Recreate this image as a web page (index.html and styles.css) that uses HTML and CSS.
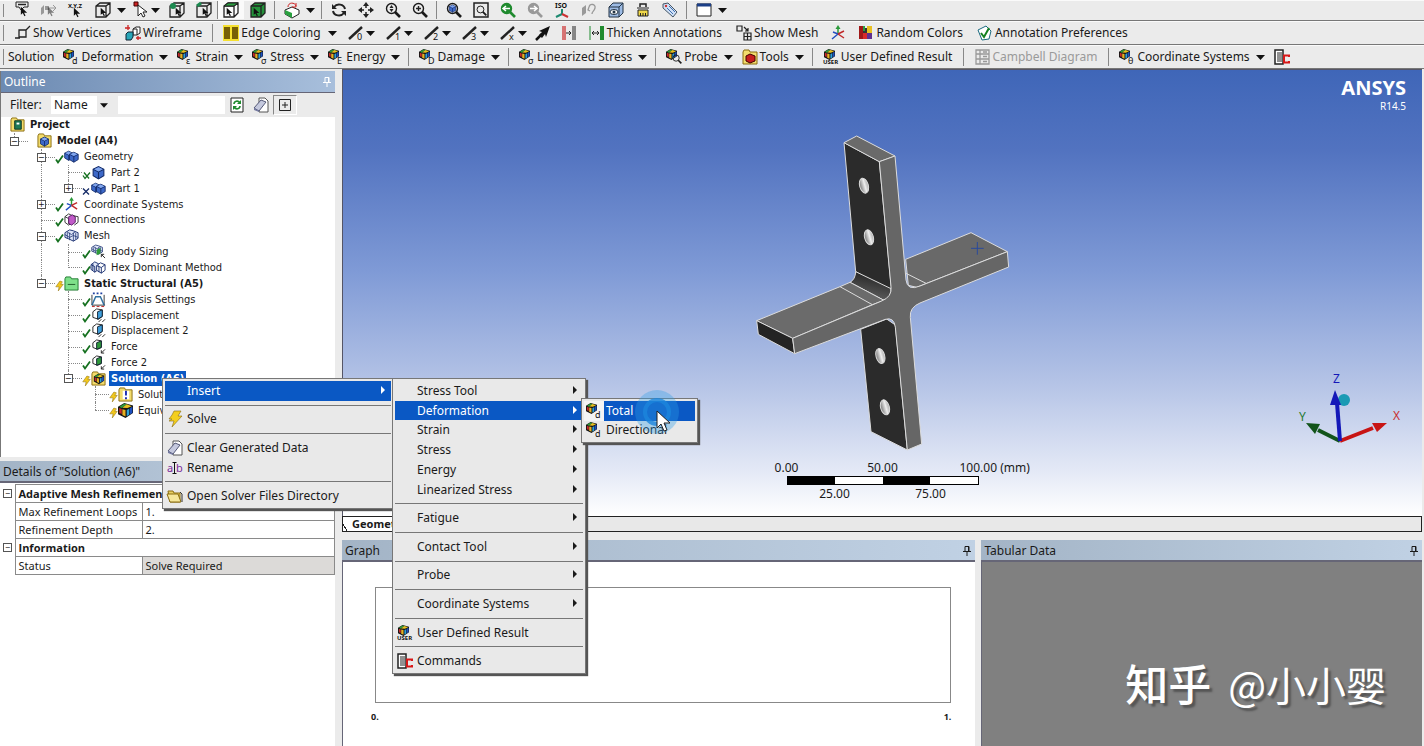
FILE: index.html
```html
<!DOCTYPE html>
<html lang="en">
<head>
  <meta charset="UTF-8">
  <meta name="viewport" content="width=device-width, initial-scale=1.0">
  <title>Static Structural - Mechanical</title>
  <link rel="stylesheet" href="styles.css">
</head>
<body>
  <!-- icon sprite -->
  <svg class="sprite" aria-hidden="true">
    <symbol id="caret" viewBox="0 0 9 5"><path d="M0 0h9L4.500 5z" fill="#111"/></symbol>
    <symbol id="pointer" viewBox="0 0 10 14"><path d="M1 1v10l2.500-2 2 4 1.500-1-2-3.500H9z" fill="#111"/></symbol>
    <symbol id="pin" viewBox="0 0 8 10"><path d="M2 .5h4v5H2zM0 5.500h8M4 6v4M5.500 1v4" fill="none" stroke="currentColor"/></symbol>
    <symbol id="box" viewBox="0 0 16 16"><path d="M1 4l4-3h10v10l-4 4H1zM1 4h10v11M11 4l4-3" fill="none" stroke="#222" stroke-width="1.300"/></symbol>
    <symbol id="rainbow" viewBox="0 0 12 12">
      <path d="M0 3l5-3 7 2v6l-6 4-6-3z" fill="#151515"/>
      <path d="M1 3l4-2.500L7 1 3 4z" fill="#2f9a3a"/><path d="M7 1l4 1.500L7.500 4 3.500 3.700z" fill="#e8c020"/>
      <path d="M1 4l2 .8v4L1 8z" fill="#c82a2a"/><path d="M3.500 5L6 5.500v5.200L3.500 9.500z" fill="#e8b020"/>
      <path d="M7 5.500l2-1v4.800l-2 1.200z" fill="#2aa0d8"/><path d="M9.500 4.200L11.500 3v5l-2 1z" fill="#1c4fc0"/>
    </symbol>
    <symbol id="result" viewBox="0 0 16 16"><use href="#rainbow" x="0" y="0" width="11" height="11"/></symbol>
    <symbol id="bluecube" viewBox="0 0 14 14"><path d="M2 4l5-2.500L12 4v6l-5 3-5-3z" fill="#3d68c8" stroke="#122a66"/><path d="M2 4l5 2.500L12 4M7 6.500V13" fill="none" stroke="#122a66"/><path d="M3 4l4-2 4 2-4 2z" fill="#83a7ee"/></symbol>
    <symbol id="twocubes" viewBox="0 0 16 14"><use href="#bluecube" x="-1" y="0" width="12" height="12"/><use href="#bluecube" x="4" y="1" width="13" height="13"/></symbol>
    <symbol id="folder" viewBox="0 0 16 16"><path d="M1 3l1-2h5l1 2h7v12H1z" fill="#f3dc6c" stroke="#8a6d10"/></symbol>
    <symbol id="f-project" viewBox="0 0 16 16"><use href="#folder"/><path d="M5 4h7v9H5z" fill="#1d7a58" stroke="#0b3325"/><path d="M7 6h3v2H7z" fill="#fff"/></symbol>
    <symbol id="f-model" viewBox="0 0 16 16"><use href="#folder"/><use href="#bluecube" x="2" y="3" width="12" height="12"/></symbol>
    <symbol id="f-static" viewBox="0 0 16 16"><path d="M1 3l1-2h5l1 2h7v12H1z" fill="#7ee08a" stroke="#1f7a30"/><path d="M4 9h8" stroke="#1f5a2a"/></symbol>
    <symbol id="f-result" viewBox="0 0 16 16"><use href="#folder"/><use href="#rainbow" x="3" y="3" width="11" height="11"/></symbol>
    <symbol id="f-info" viewBox="0 0 16 16"><use href="#folder"/><path d="M5 4h7v9H5z" fill="#fff"/><path d="M8.500 4v5M8.500 11v2" stroke="#1a2ab0" stroke-width="2"/></symbol>
    <symbol id="f-tools" viewBox="0 0 16 16"><use href="#folder"/><path d="M4 7l4-2 5 2v5l-5 2-4-2z" fill="#c81e1e" stroke="#400"/></symbol>
    <symbol id="axes" viewBox="0 0 16 16"><path d="M8 9V2" stroke="#2a9a3a" stroke-width="1.500"/><path d="M5.500 4L8 0l2.500 4z" fill="#2a9a3a"/><path d="M8 9l-6 5M3 7l5 2" stroke="#2450c0" stroke-width="1.500"/><path d="M8 9l6 4M8 9l6-3" stroke="#c02a2a" stroke-width="1.500"/></symbol>
    <symbol id="connect" viewBox="0 0 16 14"><path d="M1 4l4-3 4 2v7l-4 3-4-3zM1 4l4 2v6" fill="#fff" stroke="#333"/><path d="M5 4l4-2 3 2v6l-4 3-3-2z" fill="#c05ac8" stroke="#5a1a66"/><path d="M10 3l5 1v6l-4 3" fill="none" stroke="#333"/></symbol>
    <symbol id="mesh" viewBox="0 0 16 14"><path d="M1 4l5-3 4 1 5 2v6l-5 3-4-2-5-2z" fill="#dfe6f8" stroke="#1a2f70"/><path d="M1 6l5 3 4-2 5 2M3 3l5 3 4-3M6 4v8M3.500 4v6M10 4v9M12.500 4v7" fill="none" stroke="#1a2f70" stroke-width=".8"/></symbol>
    <symbol id="hexmesh" viewBox="0 0 16 14"><path d="M0 4l4-3 4 2v6l-4 3-4-3zM0 4l4 2v6M2 3v7" fill="#dfe6f8" stroke="#1a2f70"/><path d="M6 5l4-3 5 2v6l-4 3-5-3zM6 5l5 2 4-3M11 7v6M8.500 6v6" fill="#fff" stroke="#1a2f70"/></symbol>
    <symbol id="sizing" viewBox="0 0 16 16"><use href="#mesh" x="0" y="0" width="13" height="12"/><path d="M6 6l4-2v6l-4 2z" fill="#2f9a3a"/><path d="M11 11l4 4M11 14v-3h3" stroke="#222" fill="none"/></symbol>
    <symbol id="analysis" viewBox="0 0 16 16"><path d="M1 14V3M1 14h14M14 14V3" stroke="#333"/><path d="M1 14L5 5h5l4 9" fill="none" stroke="#3070a0" stroke-width="1.500"/><path d="M2 1.500h2M6 1.500h2M10 1.500h2" stroke="#2040a0" stroke-width="2"/><path d="M1 15.500h3M6 15.500h3M11 15.500h3" stroke="#c02020"/></symbol>
    <symbol id="disp" viewBox="0 0 16 16"><path d="M2 4l4-3 6 1v7l-4 3-6-2z" fill="#fff" stroke="#222"/><path d="M7 4l5-2v7l-5 3z" fill="#3f9fdc" stroke="#123"/><path d="M8 15l3-3M12 15l3-3" stroke="#222"/></symbol>
    <symbol id="force" viewBox="0 0 16 16"><path d="M2 4l4-3 5 1v7l-4 2-5-2z" fill="#fff" stroke="#222"/><path d="M6 4l5-2v7l-5 2z" fill="#2f9a3a" stroke="#123"/><path d="M15 11l-4 4M11 12v3h3" stroke="#222" fill="none"/></symbol>
    <symbol id="ok" viewBox="0 0 9 9"><path d="M1 5l2 3L8 1" fill="none" stroke="#15701f" stroke-width="1.800"/></symbol>
    <symbol id="okx" viewBox="0 0 9 9"><path d="M1 5l2 3 5-6M2 2l5 6" fill="none" stroke="#15701f" stroke-width="1.300"/></symbol>
    <symbol id="hidden" viewBox="0 0 9 9"><path d="M1 2l6 6M7 2L1 8" stroke="#142a66" stroke-width="1.300"/></symbol>
    <symbol id="bolt" viewBox="0 0 9 12"><path d="M5 0l3 1-2 3h3L3 12l1-5H0z" fill="#f2c81c" stroke="#8a6d10" stroke-width=".6"/></symbol>
    <symbol id="mag" viewBox="0 0 16 16"><circle cx="6.500" cy="6.500" r="5" fill="none" stroke="currentColor" stroke-width="1.400"/><path d="M10 10l5 5" stroke="currentColor" stroke-width="2.600"/></symbol>
    <symbol id="eraser" viewBox="0 0 16 16"><path d="M6 1h6l3 3v11H6z" fill="#fff" stroke="#555"/><path d="M1 11l7-8 5 2-7 9z" fill="#c5c9de" stroke="#555a78"/><path d="M1 11l5 3v1l-5-2z" fill="#7378a0"/></symbol>
    <symbol id="userres" viewBox="0 0 16 16"><use href="#rainbow" x="1" y="0" width="11" height="11"/><text x="0" y="15" class="tiny">USER</text></symbol>
    <symbol id="commands" viewBox="0 0 16 16"><path d="M1 1h8v14H1z" fill="#fff" stroke="#222" stroke-width="1.500"/><path d="M3 4h5M3 6h5M3 8h5M3 10h5M3 12h5" stroke="#222"/><path d="M15 8V6.500h-5v7h5V12" fill="none" stroke="#d81818" stroke-width="2"/></symbol>
    <symbol id="edge" viewBox="0 0 16 16"><path d="M1 14L14 2" stroke="#222" stroke-width="2.400"/></symbol>
  </svg>

  <header class="toolbars">
    <div class="toolbar icons">
      <button class="tool" aria-label="Label"><svg viewBox="0 0 16 16"><path d="M2 0h12v5h-4l-3 3-2-3H2z" fill="none" stroke="#222"/><path d="M4 2.500h8" stroke="#222" stroke-width="1.500"/><use href="#pointer" x="6" y="4" width="8" height="11"/></svg></button>
      <button class="tool" aria-label="Direction"><svg viewBox="0 0 16 16"><path d="M0 6l3-3v8l-3 2zM4 4h4v4H4z" fill="#999"/><path d="M8 6h7M12 3l3 3-3 3" stroke="#999" fill="none"/><use href="#pointer" x="6" y="4" width="8" height="11" opacity=".5"/></svg></button>
      <button class="tool" aria-label="Coordinates"><svg viewBox="0 0 16 16"><text x="0" y="6" class="tiny">X,Y,Z</text><use href="#pointer" x="5" y="5" width="8" height="11"/></svg></button>
      <button class="tool" aria-label="Select type"><svg viewBox="0 0 16 16"><use href="#box"/><use href="#pointer" x="5" y="5" width="7" height="10"/></svg></button>
      <svg class="caret"><use href="#caret"/></svg>
      <button class="tool narrow" aria-label="Select mode"><svg viewBox="0 0 16 16"><path d="M2 0h4v4H2z" fill="#c22" stroke="#400"/><path d="M6 3v11l3-3 2 4 2-1-2-4h4z" fill="#fff" stroke="#222"/></svg></button>
      <svg class="caret"><use href="#caret"/></svg>
      <button class="tool" aria-label="Vertex"><svg viewBox="0 0 16 16"><use href="#box"/><circle cx="4" cy="4" r="3" fill="#1c8a50"/><use href="#pointer" x="6" y="5" width="7" height="10"/></svg></button>
      <button class="tool" aria-label="Edge"><svg viewBox="0 0 16 16"><use href="#box"/><path d="M1 4l4-3" fill="none" stroke="#1c8a50" stroke-width="3"/><use href="#pointer" x="6" y="5" width="7" height="10"/></svg></button>
      <button class="tool pressed" aria-label="Face"><svg viewBox="0 0 16 16"><use href="#box"/><path d="M1 4l4-3h10l-4 3z" fill="#2aa040" stroke="#222"/><use href="#pointer" x="3" y="5" width="7" height="10"/></svg></button>
      <button class="tool" aria-label="Body"><svg viewBox="0 0 16 16"><path d="M1 4l4-3h10v10l-4 4H1z" fill="#23923a"/><use href="#box"/><use href="#pointer" x="3" y="5" width="7" height="10"/></svg></button>
      <span class="sep"></span>
      <button class="tool" aria-label="Extend"><svg viewBox="0 0 16 16"><path d="M1 8l7-3 7 3v4l-7 4-7-4z" fill="#fff" stroke="#222"/><path d="M1 8l7 3v5l-7-4z" fill="#2aa040"/><path d="M4 5c0-5 7-5 8-1M12 1v4H8" fill="none" stroke="#c22"/></svg></button>
      <svg class="caret"><use href="#caret"/></svg>
      <span class="sep"></span>
      <button class="tool" aria-label="Rotate"><svg viewBox="0 0 16 16"><path d="M14 7C13 2 6 1 3 5M2 9c1 5 8 6 11 2" fill="none" stroke="#222" stroke-width="2"/><path d="M1 2v5h5zM15 14V9h-5z" fill="#222"/></svg></button>
      <button class="tool" aria-label="Pan"><svg viewBox="0 0 16 16"><path d="M8 2v12M2 8h12" stroke="#222" stroke-width="1.500" stroke-dasharray="4 4"/><path d="M8 0l3 4H5zM8 16l3-4H5zM0 8l4-3v6zM16 8l-4-3v6z" fill="#222"/></svg></button>
      <button class="tool" aria-label="Zoom"><svg viewBox="0 0 16 16"><use href="#mag"/><path d="M6.500 3l2 3h-4zM6.500 10l2-3h-4z" fill="#222"/></svg></button>
      <button class="tool" aria-label="Box zoom"><svg viewBox="0 0 16 16"><use href="#mag"/><path d="M6.500 4v5M4 6.500h5" stroke="#222" stroke-width="1.400"/></svg></button>
      <span class="sep"></span>
      <button class="tool" aria-label="Fit"><svg viewBox="0 0 16 16"><use href="#mag"/><use href="#bluecube" x="2" y="2" width="9" height="9"/></svg></button>
      <button class="tool" aria-label="Magnifier"><svg viewBox="0 0 16 16"><path d="M1 1h14v14H1z" fill="none" stroke="#222" stroke-width="1.500"/><use href="#mag" x="3" y="3" width="11" height="11"/></svg></button>
      <button class="tool green" aria-label="Previous view"><svg viewBox="0 0 16 16"><use href="#mag"/><circle cx="6.500" cy="6.500" r="5" fill="#1f8a2e"/><path d="M3 6.500h7M6 4L3 6.500 6 9" stroke="#fff" fill="none" stroke-width="1.500"/></svg></button>
      <button class="tool gray" aria-label="Next view"><svg viewBox="0 0 16 16"><use href="#mag"/><circle cx="6.500" cy="6.500" r="5" fill="#999"/><path d="M3 6.500h7M7 4l3 2.500L7 9" stroke="#fff" fill="none" stroke-width="1.500"/></svg></button>
      <button class="tool" aria-label="ISO"><svg viewBox="0 0 16 16"><text x="1" y="6" class="iso">ISO</text><path d="M8 7v5" stroke="#1c8a70" stroke-width="2"/><path d="M8 12l-6 3" stroke="#1c8a70" stroke-width="2"/><path d="M8 12l6 3" stroke="#c33" stroke-width="2"/></svg></button>
      <button class="tool" aria-label="Look at"><svg viewBox="0 0 16 16"><path d="M1 6l4-3v8l-4 3z" fill="#999"/><path d="M8 5c1-4 7-3 6 1-1 4-3 3-3 6M9 9l-2-1 1-3" fill="none" stroke="#999" stroke-width="1.300"/></svg></button>
      <button class="tool" aria-label="Manage views"><svg viewBox="0 0 16 16"><path d="M1 5l4-4h10v10l-4 4H1z" fill="#9dbbe4" stroke="#234"/><path d="M1 5h10v10M11 5l4-4" fill="none" stroke="#234"/><ellipse cx="6" cy="10" rx="4" ry="2.500" fill="#fff" stroke="#234"/><circle cx="6" cy="10" r="1.500" fill="#234"/></svg></button>
      <button class="tool" aria-label="Ruler"><svg viewBox="0 0 16 16"><path d="M5 5V2h6v3" fill="none" stroke="#222" stroke-width="1.500"/><path d="M3 8h10v6H3z" fill="#f0d84a" stroke="#222"/><path d="M5.500 14v-3M8 14v-3M10.500 14v-3M2 6h12" stroke="#222"/></svg></button>
      <button class="tool" aria-label="Tags"><svg viewBox="0 0 16 16"><path d="M1 2l5-1 9 9-4 5-10-9z" fill="#cfe0f6" stroke="#456"/><path d="M5 6l6 6M7 4l6 6" stroke="#3f6fb0"/><circle cx="4" cy="4" r="1.200" fill="#c33"/></svg></button>
      <span class="sep"></span>
      <button class="tool" aria-label="Viewports"><svg viewBox="0 0 16 16"><path d="M1 2h14v12H1z" fill="#fff" stroke="#222"/><path d="M1 3h14" stroke="#1c3f88" stroke-width="3"/></svg></button>
      <svg class="caret"><use href="#caret"/></svg>
    </div>

    <div class="toolbar display">
      <button class="item"><svg viewBox="0 0 16 16"><path d="M4 5h7v7H4zM0 13h5M11 5l4-4" fill="none" stroke="#222" stroke-width="1.300"/></svg>Show Vertices</button>
      <button class="item"><svg viewBox="0 0 16 16"><path d="M8 4l3-2h4v6l-3 2H8zM8 4h4v6" fill="#fff" stroke="#222"/><path d="M1 9l2-2h5v5l-2 3H1z" fill="#29a6b8" stroke="#123"/><path d="M3 0v5M0 3h5M11 13h5M13 11v4" stroke="#c22" stroke-width="1.300"/></svg>Wireframe</button>
      <span class="sep"></span>
      <button class="item"><svg viewBox="0 0 16 16"><path d="M0 0h16v16H0z" fill="#f5e030"/><path d="M1 2h6v12H1zM9 2h6v12H9z" fill="#776006"/></svg>Edge Coloring</button>
      <svg class="caret"><use href="#caret"/></svg>
      <button class="item edge" aria-label="Free edges"><svg viewBox="0 0 16 16"><use href="#edge"/><text x="9" y="15">0</text></svg></button><svg class="caret"><use href="#caret"/></svg>
      <button class="item edge" aria-label="Single edges"><svg viewBox="0 0 16 16"><use href="#edge"/><text x="9" y="15">1</text></svg></button><svg class="caret"><use href="#caret"/></svg>
      <button class="item edge" aria-label="Double edges"><svg viewBox="0 0 16 16"><use href="#edge"/><text x="9" y="15">2</text></svg></button><svg class="caret"><use href="#caret"/></svg>
      <button class="item edge" aria-label="Triple edges"><svg viewBox="0 0 16 16"><use href="#edge"/><text x="9" y="15">3</text></svg></button><svg class="caret"><use href="#caret"/></svg>
      <button class="item edge" aria-label="Multiple edges"><svg viewBox="0 0 16 16"><use href="#edge"/><text x="9" y="15">x</text></svg></button><svg class="caret"><use href="#caret"/></svg>
      <button class="item bare" aria-label="Edge direction"><svg viewBox="0 0 16 16"><path d="M1 15l6-6" stroke="#111" stroke-width="2.500"/><path d="M15 1L4 6l3 1-3 3 3 3 3-4 1 3z" fill="#111"/></svg></button>
      <button class="item bare" aria-label="Align"><svg viewBox="0 0 16 16"><path d="M2 1v14M4 1v14" stroke="#c33" stroke-width="1.300"/><path d="M12 1v14M14 1v14" stroke="#666" stroke-width="1.500"/><path d="M5 8h5M8 6l2 2-2 2" stroke="#222" fill="none"/></svg></button>
      <button class="item"><svg viewBox="0 0 16 16"><path d="M1 1v14" stroke="#1f8a2e"/><path d="M13 1v14" stroke="#1f8a2e" stroke-width="4"/><path d="M3 8h7M5 6L3 8l2 2M8 6l2 2-2 2" stroke="#222" fill="none"/></svg>Thicken Annotations</button>
      <button class="item"><svg viewBox="0 0 16 16"><path d="M1 1h5v5H1zM8 2l4 4M12 3v3H9M8 8h7v7H8zM11.500 8v7M8 11.500h7" fill="none" stroke="#222" stroke-width="1.200"/></svg>Show Mesh</button>
      <button class="item bare" aria-label="Axes"><svg viewBox="0 0 16 16"><use href="#axes"/></svg></button>
      <button class="item"><svg viewBox="0 0 16 16"><path d="M1 1h4v13H1z" fill="#a01818"/><path d="M5 3h4v11H5z" fill="#333"/><path d="M5 8h4v6H5z" fill="#d82a2a"/><path d="M9 1h5v7H9z" fill="#e8c020"/><path d="M9 8h5v6H9z" fill="#603090"/><path d="M5 1h2v5H5z" fill="#2aa040"/></svg>Random Colors</button>
      <button class="item"><svg viewBox="0 0 16 16"><path d="M1 5l8-4 5 5-2 8-7 1z" fill="#fff" stroke="#1a6a80"/><path d="M4 8l3 4 5-9" fill="none" stroke="#15801f" stroke-width="2"/></svg>Annotation Preferences</button>
    </div>

    <div class="toolbar solution">
      <span class="name">Solution</span>
      <button class="item"><svg viewBox="0 0 16 16"><use href="#result"/><text x="9" y="15">d</text></svg>Deformation</button><svg class="caret"><use href="#caret"/></svg>
      <button class="item"><svg viewBox="0 0 16 16"><use href="#result"/><text x="9" y="15">ε</text></svg>Strain</button><svg class="caret"><use href="#caret"/></svg>
      <button class="item"><svg viewBox="0 0 16 16"><use href="#result"/><text x="9" y="15">σ</text></svg>Stress</button><svg class="caret"><use href="#caret"/></svg>
      <button class="item"><svg viewBox="0 0 16 16"><use href="#result"/><text x="9" y="15">E</text></svg>Energy</button><svg class="caret"><use href="#caret"/></svg>
      <span class="sep"></span>
      <button class="item"><svg viewBox="0 0 16 16"><use href="#result"/><text x="9" y="15">D</text></svg>Damage</button><svg class="caret"><use href="#caret"/></svg>
      <span class="sep"></span>
      <button class="item"><svg viewBox="0 0 16 16"><use href="#result"/><text x="9" y="15">σ</text></svg>Linearized Stress</button><svg class="caret"><use href="#caret"/></svg>
      <span class="sep"></span>
      <button class="item"><svg viewBox="0 0 16 16"><use href="#result"/><use href="#mag" x="6" y="5" width="10" height="10"/></svg>Probe</button><svg class="caret"><use href="#caret"/></svg>
      <button class="item"><svg viewBox="0 0 16 16"><use href="#f-tools"/></svg>Tools</button><svg class="caret"><use href="#caret"/></svg>
      <span class="sep"></span>
      <button class="item"><svg viewBox="0 0 16 16"><use href="#userres"/></svg>User Defined Result</button>
      <span class="sep"></span>
      <button class="item" disabled><svg viewBox="0 0 16 16"><path d="M2 1h13v14H2zM6 1v14M2 5h13M2 10h13M9 3h4M9 7.500h4M9 12.500h4" fill="none" stroke="#999" stroke-width="1.300"/></svg>Campbell Diagram</button>
      <span class="sep"></span>
      <button class="item"><svg viewBox="0 0 16 16"><use href="#result"/><text x="9" y="15">θ</text></svg>Coordinate Systems</button><svg class="caret"><use href="#caret"/></svg>
      <button class="item" aria-label="Commands"><svg viewBox="0 0 16 16"><use href="#commands"/></svg></button>
    </div>
  </header>

  <main class="workspace">
    <aside class="side">
      <section class="outline">
        <h2 class="title active">Outline<svg class="pin"><use href="#pin"/></svg></h2>
        <div class="filter">
          <label for="filter-by">Filter:</label>
          <span class="combo"><select id="filter-by"><option>Name</option></select><svg class="caret"><use href="#caret"/></svg></span>
          <input type="text" aria-label="Filter text">
          <button class="tool" aria-label="Refresh"><svg viewBox="0 0 16 16"><path d="M2 1h12v14H2z" fill="#fff" stroke="#222"/><path d="M5 7c0-3 4-4 6-1M11 9c0 3-4 4-6 1" fill="none" stroke="#1f8a2e" stroke-width="1.600"/><path d="M12 3v4H8zM4 13V9h4z" fill="#1f8a2e"/></svg></button>
          <button class="tool" aria-label="Clear"><svg viewBox="0 0 16 16"><use href="#eraser"/></svg></button>
          <button class="tool sunk" aria-label="Expand all"><svg viewBox="0 0 16 16"><path d="M2.500 2.500h11v11h-11zM5 8h6M8 5v6" fill="none" stroke="#222"/></svg></button>
        </div>
        <ul class="tree">
          <li><span class="ico"><svg class="pic"><use href="#f-project"/></svg></span><b>Project</b></li>
          <li><span class="branch last"><button class="exp">−</button></span><span class="ico"><svg class="pic"><use href="#f-model"/></svg></span><b>Model (A4)</b></li>
          <li><span class="guide"></span><span class="branch"><button class="exp">−</button></span><span class="ico"><svg class="st"><use href="#ok"/></svg><svg class="pic"><use href="#twocubes"/></svg></span>Geometry</li>
          <li><span class="guide"></span><span class="guide line"></span><span class="branch"></span><span class="ico"><svg class="st"><use href="#okx"/></svg><svg class="pic"><use href="#bluecube"/></svg></span>Part 2</li>
          <li><span class="guide"></span><span class="guide line"></span><span class="branch last"><button class="exp">+</button></span><span class="ico"><svg class="st"><use href="#hidden"/></svg><svg class="pic"><use href="#twocubes"/></svg></span>Part 1</li>
          <li><span class="guide"></span><span class="branch"><button class="exp">+</button></span><span class="ico"><svg class="st"><use href="#ok"/></svg><svg class="pic"><use href="#axes"/></svg></span>Coordinate Systems</li>
          <li><span class="guide"></span><span class="branch"></span><span class="ico"><svg class="st"><use href="#ok"/></svg><svg class="pic"><use href="#connect"/></svg></span>Connections</li>
          <li><span class="guide"></span><span class="branch"><button class="exp">−</button></span><span class="ico"><svg class="st"><use href="#ok"/></svg><svg class="pic"><use href="#mesh"/></svg></span>Mesh</li>
          <li><span class="guide"></span><span class="guide line"></span><span class="branch"></span><span class="ico"><svg class="st"><use href="#ok"/></svg><svg class="pic"><use href="#sizing"/></svg></span>Body Sizing</li>
          <li><span class="guide"></span><span class="guide line"></span><span class="branch last"></span><span class="ico"><svg class="st"><use href="#ok"/></svg><svg class="pic"><use href="#hexmesh"/></svg></span>Hex Dominant Method</li>
          <li><span class="guide"></span><span class="branch last"><button class="exp">−</button></span><span class="ico"><svg class="st"><use href="#bolt"/></svg><svg class="pic"><use href="#f-static"/></svg></span><b>Static Structural (A5)</b></li>
          <li><span class="guide"></span><span class="guide"></span><span class="branch"></span><span class="ico"><svg class="st"><use href="#ok"/></svg><svg class="pic"><use href="#analysis"/></svg></span>Analysis Settings</li>
          <li><span class="guide"></span><span class="guide"></span><span class="branch"></span><span class="ico"><svg class="st"><use href="#ok"/></svg><svg class="pic"><use href="#disp"/></svg></span>Displacement</li>
          <li><span class="guide"></span><span class="guide"></span><span class="branch"></span><span class="ico"><svg class="st"><use href="#ok"/></svg><svg class="pic"><use href="#disp"/></svg></span>Displacement 2</li>
          <li><span class="guide"></span><span class="guide"></span><span class="branch"></span><span class="ico"><svg class="st"><use href="#ok"/></svg><svg class="pic"><use href="#force"/></svg></span>Force</li>
          <li><span class="guide"></span><span class="guide"></span><span class="branch"></span><span class="ico"><svg class="st"><use href="#ok"/></svg><svg class="pic"><use href="#force"/></svg></span>Force 2</li>
          <li><span class="guide"></span><span class="guide"></span><span class="branch last"><button class="exp">−</button></span><span class="ico"><svg class="st"><use href="#bolt"/></svg><svg class="pic"><use href="#f-result"/></svg></span><b class="selected">Solution (A6)</b></li>
          <li><span class="guide"></span><span class="guide"></span><span class="guide"></span><span class="branch"></span><span class="ico"><svg class="st"><use href="#bolt"/></svg><svg class="pic"><use href="#f-info"/></svg></span>Solution</li>
          <li><span class="guide"></span><span class="guide"></span><span class="guide"></span><span class="branch last"></span><span class="ico"><svg class="st"><use href="#bolt"/></svg><svg class="pic"><use href="#rainbow"/></svg></span>Equivalent</li>
        </ul>
      </section>

      <section class="details">
        <h2 class="title">Details of "Solution (A6)"</h2>
        <table>
          <colgroup><col class="c-toggle"><col class="c-key"><col></colgroup>
          <tbody>
            <tr><td class="toggle"><button class="exp">−</button></td><th colspan="2">Adaptive Mesh Refinement</th></tr>
            <tr><td class="toggle"></td><td>Max Refinement Loops</td><td>1.</td></tr>
            <tr><td class="toggle"></td><td>Refinement Depth</td><td>2.</td></tr>
            <tr><td class="toggle"><button class="exp">−</button></td><th colspan="2">Information</th></tr>
            <tr><td class="toggle"></td><td>Status</td><td class="readonly">Solve Required</td></tr>
          </tbody>
        </table>
      </section>
    </aside>

    <div class="stage">
      <section class="viewport">
        <div class="brand"><strong>ANSYS</strong><span>R14.5</span></div>
        <svg class="model" viewBox="-6 0 870 1020">
          <defs>
            <linearGradient id="fillet" x1="0" y1="0" x2="-.3" y2="1"><stop offset="0" stop-color="#2b2b2b"/><stop offset="1" stop-color="#707070"/></linearGradient>
            <linearGradient id="bore" x1="0" y1="0" x2="1" y2="0"><stop offset="0" stop-color="#777"/><stop offset=".6" stop-color="#eee"/><stop offset="1" stop-color="#aaa"/></linearGradient>
          </defs>
          <g stroke="#dcdcdc" stroke-width="3" stroke-linejoin="round">
            <path d="M497 418L693 338 802 395 560 490 530 502 505 496z" fill="#696969"/>
            <path d="M498 460l60 30" fill="none"/>
            <path d="M362 628L440 597 466 615 502 990 393 935z" fill="#2b2b2b"/>
            <path d="M312 68L418 125 455 515 347 455z" fill="#2b2b2b"/>
            <path d="M347 455L453 506 Q454 535 432 541L330 487Q346 478 347 455z" fill="url(#fillet)"/>
            <path d="M50 602L300 500 330 487 432 541 397 554 158 655z" fill="#6b6b6b"/>
            <path d="M300 500l97 54" fill="none"/>
            <path d="M50 602L158 655 164 701 55 643z" fill="#242424"/>
            <path d="M312 68L350 48 465 108 418 125z" fill="#6a6a6a"/>
            <path d="M418 125L465 108 498 480Q502 514 540 498L802 395 806 441 540 549Q508 562 511 592L545 972 502 990 466 622Q462 590 436 598L164 701 158 655 425 543Q457 530 453 500z" fill="#666"/>
            <g fill="url(#bore)">
              <ellipse cx="372" cy="197" rx="13" ry="23" transform="rotate(-16 372 197)"/>
              <ellipse cx="387" cy="352" rx="13" ry="23" transform="rotate(-16 387 352)"/>
              <ellipse cx="421" cy="708" rx="13" ry="23" transform="rotate(-16 421 708)"/>
              <ellipse cx="435" cy="862" rx="13" ry="23" transform="rotate(-16 435 862)"/>
            </g>
          </g>
          <path d="M712 366v38M693 385h38" stroke="#2a4a9c" stroke-width="3"/>
        </svg>
        <div class="scale">
          <div class="ticks"><span>0.00</span><span>50.00</span><span class="end">100.00 (mm)</span></div>
          <div class="bar"><i></i><i></i><i></i><i></i></div>
          <div class="ticks lower"><span>25.00</span><span>75.00</span></div>
        </div>
        <svg class="triad" viewBox="0 0 110 80">
          <circle cx="50" cy="30" r="6" fill="#1a9ab4"/>
          <path d="M46 71L24 60" stroke="#12541a" stroke-width="4"/><path d="M12 53l14 1-5 10z" fill="#12541a"/>
          <path d="M46 71l33-13" stroke="#c81414" stroke-width="4"/><path d="M93 53l-15 0 5 9z" fill="#c81414"/>
          <path d="M46 71L43 33" stroke="#1418b8" stroke-width="4"/><path d="M41 20l-5 15h11z" fill="#1418b8"/>
          <text x="39" y="13" class="z">Z</text><text x="5" y="51" class="y">Y</text><text x="99" y="50" class="x">X</text>
        </svg>
      </section>

      <div class="tabs"><button class="tab">Geometry</button></div>

      <div class="bottom">
        <section class="pane">
          <h2 class="title">Graph<svg class="pin"><use href="#pin"/></svg></h2>
          <div class="graph">
            <div class="plot"></div>
            <div class="range"><span>0.</span><span>1.</span></div>
          </div>
        </section>
        <section class="pane">
          <h2 class="title">Tabular Data<svg class="pin"><use href="#pin"/></svg></h2>
          <div class="tabular">
            <p class="mark"><b>知乎</b> @小小婴</p>
          </div>
        </section>
      </div>
    </div>
  </main>

  <!-- context menu and its two submenus -->
  <div class="menu context" role="menu">
    <button class="on">Insert<svg class="arrow" viewBox="0 0 4 8"><path d="M0 0l4 4-4 4z"/></svg></button>
    <hr>
    <button><svg class="mi" viewBox="0 0 16 16"><path d="M7 0h7l-3 5h4L5 16l2-6H2l3-2H2l3-4z" fill="#f4cf1e" stroke="#8a6d10" stroke-width=".6"/></svg>Solve</button>
    <hr>
    <button><svg class="mi"><use href="#eraser"/></svg>Clear Generated Data</button>
    <button><svg class="mi" viewBox="0 0 16 16"><text x="0" y="12" class="ab">a</text><text x="9" y="12" class="ab">b</text><path d="M5.500 2.500h4M5.500 13.500h4M7.500 2v12" stroke="#111"/></svg>Rename</button>
    <hr>
    <button><svg class="mi" viewBox="0 0 16 16"><path d="M1 3h5l1 2h6v9H3z" fill="#e8cf62" stroke="#8a6d10"/><path d="M0 6h11l3 8H3z" fill="#f6e79a" stroke="#8a6d10"/><path d="M13 4l2 2v8" fill="none" stroke="#333"/></svg>Open Solver Files Directory</button>
  </div>

  <div class="menu insert" role="menu">
    <button>Stress Tool<svg class="arrow" viewBox="0 0 4 8"><path d="M0 0l4 4-4 4z"/></svg></button>
    <button class="on">Deformation<svg class="arrow" viewBox="0 0 4 8"><path d="M0 0l4 4-4 4z"/></svg></button>
    <button>Strain<svg class="arrow" viewBox="0 0 4 8"><path d="M0 0l4 4-4 4z"/></svg></button>
    <button>Stress<svg class="arrow" viewBox="0 0 4 8"><path d="M0 0l4 4-4 4z"/></svg></button>
    <button>Energy<svg class="arrow" viewBox="0 0 4 8"><path d="M0 0l4 4-4 4z"/></svg></button>
    <button>Linearized Stress<svg class="arrow" viewBox="0 0 4 8"><path d="M0 0l4 4-4 4z"/></svg></button>
    <hr>
    <button>Fatigue<svg class="arrow" viewBox="0 0 4 8"><path d="M0 0l4 4-4 4z"/></svg></button>
    <hr>
    <button>Contact Tool<svg class="arrow" viewBox="0 0 4 8"><path d="M0 0l4 4-4 4z"/></svg></button>
    <hr>
    <button>Probe<svg class="arrow" viewBox="0 0 4 8"><path d="M0 0l4 4-4 4z"/></svg></button>
    <hr>
    <button>Coordinate Systems<svg class="arrow" viewBox="0 0 4 8"><path d="M0 0l4 4-4 4z"/></svg></button>
    <hr>
    <button><svg class="mi"><use href="#userres"/></svg>User Defined Result</button>
    <hr>
    <button><svg class="mi"><use href="#commands"/></svg>Commands</button>
  </div>

  <div class="menu deformation" role="menu">
    <button class="on boxed"><svg class="mi" viewBox="0 0 16 16"><use href="#result"/><text x="9" y="15">d</text></svg>Total</button>
    <button><svg class="mi" viewBox="0 0 16 16"><use href="#result"/><text x="9" y="15">d</text></svg>Directional</button>
  </div>

  <svg class="cursor" viewBox="0 0 46 46">
    <circle cx="23" cy="23" r="22" fill="#2f9fe8" opacity=".35"/>
    <circle cx="23" cy="23" r="12" fill="none" stroke="#1c86dc" stroke-width="4" opacity=".8"/>
    <path d="M23 22v17l4-4 3 7 3-1-3-7h6z" fill="#fff" stroke="#222"/>
  </svg>
</body>
</html>
```
FILE: styles.css
```css
* {
  box-sizing: border-box;
}
body {
  margin: 0;
  min-height: 100vh;
  display: flex;
  flex-direction: column;
  background: #ebebeb;
  color: #1a1a1a;
  font-family: "Noto Sans", "Open Sans", sans-serif;
  font-size: 12px;
  line-height: 16px;
  overflow: hidden;
}
button, input, select {
  font: inherit;
  color: inherit;
  border: 0;
  padding: 0;
  margin: 0;
  background: none;
  border-radius: 0;
}
svg {
  display: block;
  flex: none;
}
svg, symbol {
  overflow: visible;
}
svg text {
  font-size: 9px;
  fill: #111;
}
svg .tiny {
  font-size: 6px;
  font-weight: bold;
}
svg .iso {
  font-size: 7px;
  font-weight: bold;
}
svg .ab {
  font-size: 11px;
  fill: #7a2a9a;
}
.sprite {
  position: absolute;
  width: 0;
  height: 0;
}

/* toolbars */
.toolbar {
  display: flex;
  align-items: center;
  height: 24px;
  padding: 1px 0 0 8px;
  border-bottom: 1px solid #777;
  box-shadow: inset 0 1px #fafafa;
  position: relative;
  white-space: nowrap;
}
.toolbar::before {
  content: "";
  position: absolute;
  left: 3px;
  top: 4px;
  bottom: 3px;
  width: 1px;
  background: #888;
}
.toolbar.icons {
  height: 21px;
  padding-top: 0;
}
.tool {
  width: 27px;
  height: 20px;
  display: flex;
  align-items: center;
  justify-content: center;
}
.tool svg {
  width: 16px;
  height: 16px;
}
.icons .tool {
  height: 18px;
}
.tool.narrow {
  width: 21px;
}
.tool.pressed {
  background: #fafafa;
  border-left: 1px solid #888;
}
.tool.green {
  color: #1f8a2e;
}
.tool.gray {
  color: #999;
}
.caret {
  width: 9px;
  height: 5px;
  margin: 0 3px 0 1px;
}
.sep {
  width: 1px;
  height: 18px;
  margin: 0 3px;
  background: #888;
}
.item {
  display: flex;
  align-items: center;
  gap: 2px;
  padding: 0 6px;
}
.item svg {
  width: 16px;
  height: 16px;
}
.item + .caret {
  margin: 0 3px 0 0;
}
.display .item {
  padding: 0 7px;
}
.display .edge {
  padding: 0 2px 0 8px;
}
.display .bare {
  padding: 0 5px;
}
.item:disabled {
  color: #9a9a9a;
}
.solution .sep {
  margin: 0 4px 0 5px;
}
.toolbar .name {
  padding-right: 3px;
}

/* main split */
.workspace {
  flex: 1;
  display: grid;
  grid-template-columns: 335px 1fr;
  gap: 7px;
  padding-right: 2px;
}
.side, .stage {
  display: flex;
  flex-direction: column;
  min-width: 0;
}
.side {
  padding-top: 2px;
}
.title {
  display: flex;
  align-items: center;
  justify-content: space-between;
  height: 22px;
  margin: 0;
  padding: 1px 4px 0 3px;
  font-size: 12px;
  font-weight: normal;
  background: linear-gradient(90deg, #a3b4c6, #c0d1e4);
  border-bottom: 2px solid #667;
}
.title.active {
  color: #fff;
  padding-top: 0;
  background: linear-gradient(90deg, #6c8ab2, #a8bfdc);
  border-bottom: 1px solid #667;
}
.pin {
  width: 8px;
  height: 10px;
}

/* outline */
.outline {
  flex: 1;
  display: flex;
  flex-direction: column;
  border-left: 1px solid #777;
  background: #fff;
}
.filter {
  display: flex;
  align-items: center;
  height: 24px;
  padding-left: 9px;
  background: #ebebeb;
}
.filter label {
  width: 41px;
}
.combo {
  display: flex;
  align-items: center;
  width: 60px;
  height: 18px;
}
.combo select {
  appearance: none;
  width: 46px;
  height: 18px;
  padding-left: 3px;
  background: #fff;
}
.combo .caret {
  width: 8px;
  margin: 0 3px;
}
.filter input {
  width: 107px;
  height: 18px;
  margin: 0 0 0 7px;
  background: #fff;
}
.filter .tool {
  width: 24px;
}
.tool.sunk {
  border: 1px solid #888;
  border-right-color: #fff;
  border-bottom-color: #fff;
}
.tree {
  list-style: none;
  height: 301px;
  margin: 0;
  padding: 0;
  display: grid;
  grid-auto-rows: 1fr;
  font-family: "DejaVu Sans Condensed", "Noto Sans", sans-serif;
  font-size: 11px;
  line-height: 15px;
  white-space: nowrap;
}
.tree li {
  display: flex;
  align-items: center;
}
.guide, .branch {
  width: 27px;
  align-self: stretch;
  position: relative;
}
.guide.line::before, .branch::before {
  content: "";
  position: absolute;
  left: 13px;
  top: 0;
  bottom: 0;
  border-left: 1px dotted #888;
}
.branch.last::before {
  bottom: 50%;
}
.branch::after {
  content: "";
  position: absolute;
  left: 13px;
  right: 0;
  top: 50%;
  border-top: 1px dotted #888;
}
.exp {
  width: 9px;
  height: 9px;
  border: 1px solid #555;
  background: #fff;
  font-size: 9px;
  line-height: 7px;
  text-align: center;
  display: block;
}
.branch .exp {
  position: absolute;
  left: 9px;
  top: 4px;
  z-index: 1;
}
.ico {
  display: flex;
  align-items: flex-end;
  justify-content: flex-end;
  width: 29px;
  padding-right: 5px;
}
.ico .pic {
  width: 15px;
  height: 15px;
}
.ico .st {
  width: 9px;
  height: 10px;
}
.selected {
  padding: 0 2px;
  margin-left: -2px;
  background: #0a58c4;
  color: #fff;
}

/* details */
.details {
  height: 285px;
  margin-top: 4px;
  background: #fff;
}
.details table {
  width: 100%;
  margin-top: 1px;
  border-collapse: collapse;
  table-layout: fixed;
  font-size: 11px;
  line-height: 17px;
}
.c-toggle {
  width: 15px;
}
.c-key {
  width: 127px;
}
.details td, .details th {
  border: 1px solid #8a8a8a;
  padding: 0 3px;
  height: 18px;
  text-align: left;
  white-space: nowrap;
}
.details th {
  font-family: "Open Sans", sans-serif;
}
.details td.toggle {
  border-width: 0 1px 0 0;
}
.details .readonly {
  background: #dcdad8;
}

/* 3D view */
.viewport {
  flex: 1;
  display: flex;
  flex-direction: column;
  align-items: center;
  position: relative;
  border-top: 1px solid #556;
  border-left: 1px solid #556;
  background: linear-gradient(#3f66b8, #5273c0 18%, #7f9ad6 45%, #b4c3e6 70%, #e4e9f6 90%, #fff);
}
.brand {
  position: absolute;
  top: 7px;
  right: 16px;
  color: #fff;
  text-align: right;
}
.brand strong {
  display: block;
  font-size: 20px;
  line-height: 22px;
}
.brand span {
  display: block;
  font-size: 10px;
  line-height: 14px;
}
.model {
  width: 290px;
  height: 340px;
  margin-top: 50px;
}
.scale {
  width: 192px;
}
.ticks {
  display: grid;
  grid-template-columns: repeat(3, 96px);
  margin-left: -48px;
  text-align: center;
  white-space: nowrap;
}
.ticks .end {
  padding-left: 29px;
  text-align: left;
}
.ticks.lower {
  grid-template-columns: repeat(2, 96px);
  margin: 1px 0 0;
}
.bar {
  display: grid;
  grid-template-columns: repeat(4, 1fr);
  height: 9px;
  border: 1px solid #000;
  background: #fff;
}
.bar i:nth-child(odd) {
  background: #000;
}
.triad {
  position: absolute;
  right: 18px;
  bottom: 66px;
  width: 110px;
  height: 80px;
}
.triad text {
  font-size: 12px;
}
.triad .x {
  fill: #c83030;
}
.triad .y {
  fill: #1f7a30;
}
.triad .z {
  fill: #1418b8;
}
.tabs {
  height: 16px;
  border: 1px solid #222;
  background: #e8e8e8;
}
.tab {
  display: block;
  height: 14px;
  padding-left: 9px;
  font-size: 11px;
  line-height: 14px;
  font-weight: bold;
  background: linear-gradient(60deg, #fff 3px, #222 3px, #222 4px, #fff 4px);
}

/* graph and table */
.bottom {
  height: 206px;
  margin-top: 8px;
  display: grid;
  grid-template-columns: 23fr 16fr;
  gap: 6px;
}
.pane {
  display: flex;
  flex-direction: column;
}
.graph, .tabular {
  flex: 1;
  border-left: 1px solid #667;
}
.graph {
  padding: 25px 24px 0 32px;
  background: #fff;
}
.plot {
  height: 116px;
  border: 1px solid #888;
}
.range {
  display: flex;
  justify-content: space-between;
  margin: 6px 0 0 -4px;
  font-size: 9px;
  font-weight: bold;
}
.tabular {
  display: flex;
  align-items: flex-end;
  justify-content: flex-end;
  background: #808080;
}
.mark {
  margin: 0 36px 32px 0;
  color: #fff;
  font-family: "Noto Sans CJK SC", sans-serif;
  font-size: 40px;
  line-height: 60px;
  text-shadow: 3px 3px 2px #555;
  white-space: nowrap;
}
.mark b {
  margin-right: 8px;
  font-size: 43px;
  font-weight: 500;
}

/* menus */
.menu {
  position: absolute;
  display: flex;
  flex-direction: column;
  padding: 2px;
  background: #e9e9e9;
  border: 1px solid #777;
  box-shadow: 2px 2px 1px #555;
}
.menu.context {
  left: 162px;
  top: 378px;
  width: 232px;
  height: 131px;
}
.menu.insert {
  left: 392px;
  top: 378px;
  width: 194px;
  height: 296px;
}
.menu.deformation {
  left: 581px;
  top: 398px;
  width: 117px;
  height: 45px;
}
.menu button {
  flex: 20 1 0;
  display: flex;
  align-items: center;
  position: relative;
  padding-left: 22px;
  text-align: left;
  white-space: nowrap;
}
.menu hr {
  flex: 9 1 0;
  width: 100%;
  margin: 0;
  border: 0;
  background: linear-gradient(#777, #777) center / 100% 1px no-repeat;
}
.menu .on {
  background: #0a58c4;
  color: #fff;
}
.menu .mi {
  position: absolute;
  left: 2px;
  width: 16px;
  height: 16px;
}
.menu .boxed {
  background: linear-gradient(90deg, #f4f4f4 20px, #0a58c4 20px);
}
.arrow {
  width: 4px;
  height: 8px;
  margin: 0 6px 2px auto;
  fill: currentColor;
}
.cursor {
  position: absolute;
  left: 634px;
  top: 389px;
  width: 46px;
  height: 46px;
}
```
